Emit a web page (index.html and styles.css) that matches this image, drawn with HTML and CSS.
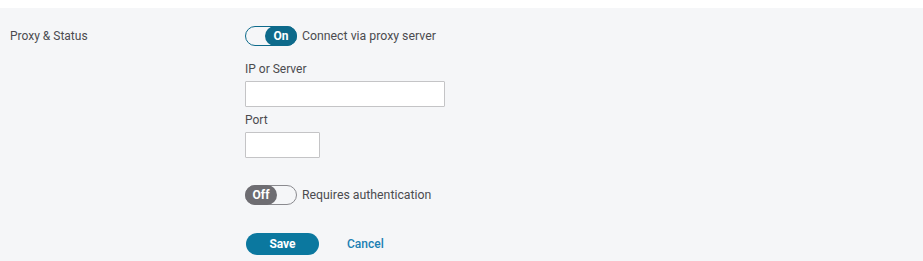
FILE: index.html
```html
<!DOCTYPE html>
<html lang="en">
<head>
    <meta charset="UTF-8">
    <meta name="viewport" content="width=device-width, initial-scale=1.0">
    <title>Proxy Settings</title>
    <link rel="stylesheet" href="styles.css">
</head>
<body>
    <div class="panel">
        <div class="row">
            <div class="label">Proxy &amp; Status</div>
            <div class="fields">
                <div class="toggle-line">
                    <span class="toggle on"><span class="knob">On</span></span>
                    <span class="toggle-text">Connect via proxy server</span>
                </div>
                <div class="field">
                    <label class="field-label">IP or Server</label>
                    <input class="input wide" type="text">
                </div>
                <div class="field">
                    <label class="field-label">Port</label>
                    <input class="input short" type="text">
                </div>
                <div class="toggle-line auth">
                    <span class="toggle off"><span class="knob">Off</span></span>
                    <span class="toggle-text">Requires authentication</span>
                </div>
                <div class="actions">
                    <button class="save-btn">Save</button>
                    <a class="cancel" href="#">Cancel</a>
                </div>
            </div>
        </div>
    </div>
</body>
</html>
```

FILE: styles.css
```css
body {
    margin: 0;
    font-family: Roboto, sans-serif;
    font-size: 12px;
    color: #4b4b4f;
    background: #ffffff;
}
.panel {
    margin-top: 8px;
    background: #f5f6f8;
    height: 253px;
    box-sizing: border-box;
    padding: 18px 10px 0;
}
.row {
    display: flex;
}
.label {
    width: 235px;
    line-height: 20px;
}
.toggle-line {
    display: flex;
    align-items: center;
    height: 20px;
}
.toggle-text {
    font-size: 12.3px;
}
.toggle {
    width: 52px;
    height: 20px;
    box-sizing: border-box;
    border-radius: 10px;
    display: flex;
    margin-right: 5px;
}
.toggle.on {
    border: 1px solid #0d6a8b;
    justify-content: flex-end;
}
.toggle.off {
    border: 1px solid #8a8a8f;
    justify-content: flex-start;
}
.knob {
    width: 32px;
    height: 20px;
    margin: -1px;
    border-radius: 10px;
    color: #ffffff;
    font-weight: bold;
    display: flex;
    align-items: center;
    justify-content: center;
}
.toggle.on .knob {
    background: #0d6a8b;
}
.toggle.off .knob {
    background: #6e6d72;
}
.field {
    margin-top: 15px;
}
.field + .field {
    margin-top: 5px;
}
.field-label {
    display: block;
    line-height: 16px;
    margin-bottom: 4px;
}
.input {
    display: block;
    height: 26px;
    box-sizing: border-box;
    border: 1px solid #c4c4c6;
    background: #ffffff;
    border-radius: 1px;
    padding: 0 6px;
}
.input.wide {
    width: 200px;
}
.input.short {
    width: 75px;
}
.auth {
    margin-top: 27px;
}
.actions {
    display: flex;
    align-items: center;
    margin-top: 28px;
}
.save-btn {
    width: 73px;
    height: 22px;
    margin-left: 1px;
    border: none;
    border-radius: 11px;
    background: #0b789f;
    color: #ffffff;
    font-family: Roboto, sans-serif;
    font-size: 12px;
    font-weight: bold;
    cursor: pointer;
}
.cancel {
    margin-left: 28px;
    color: #1b7fb3;
    text-decoration: none;
    font-weight: 500;
}
```
